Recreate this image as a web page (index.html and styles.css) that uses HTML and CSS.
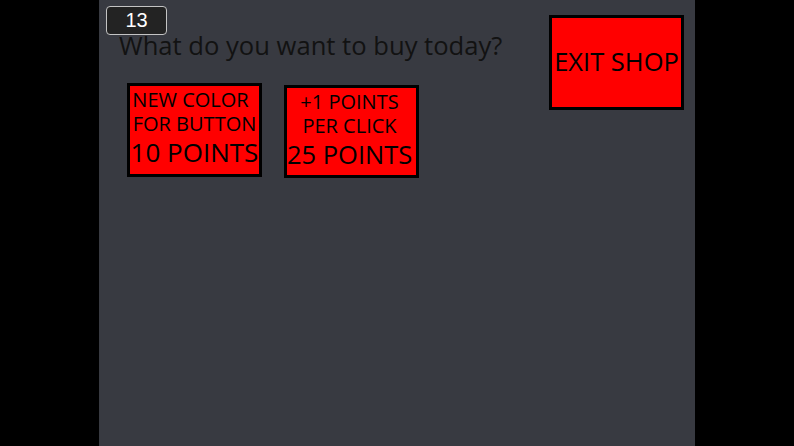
FILE: index.html
```html
<!DOCTYPE html>
<html>
<head>
<meta charset="utf-8">
<link rel="stylesheet" href="styles.css">
</head>
<body>
<div class="panel">
  <div class="main">
    <div class="counter">13</div>
    <div class="question">What do you want to buy today?</div>
    <div class="items">
      <div class="item">
        <div class="line first">NEW COLOR</div>
        <div class="line">FOR BUTTON</div>
        <div class="price">10 POINTS</div>
      </div>
      <div class="item second">
        <div class="line">+1 POINTS</div>
        <div class="line">PER CLICK</div>
        <div class="price">25 POINTS</div>
      </div>
    </div>
  </div>
  <div class="exit">EXIT SHOP</div>
</div>
</body>
</html>
```
FILE: styles.css
```css
html, body {
  margin: 0;
  padding: 0;
  background: #000;
  height: 100%;
}
body {
  display: flex;
  justify-content: center;
  font-family: "Open Sans", "Noto Sans", sans-serif;
}
.panel {
  width: 596px;
  height: 446px;
  background: #383a41;
  box-sizing: border-box;
  padding-top: 6px;
  display: grid;
  grid-template-columns: 1fr auto;
  align-items: start;
}
.main {
  display: flex;
  flex-direction: column;
  align-items: flex-start;
}
.counter {
  margin-left: 7px;
  width: 61px;
  height: 29px;
  box-sizing: border-box;
  border: 1px solid #c4c4c4;
  border-radius: 4px;
  background: #232323;
  color: #fff;
  font-family: "Liberation Sans", Arial, sans-serif;
  font-size: 20px;
  line-height: 27px;
  text-align: center;
}
.question {
  margin-left: 20px;
  font-size: 25.6px;
  line-height: 21px;
  color: #121212;
  white-space: nowrap;
}
.items {
  display: flex;
  align-items: flex-start;
  gap: 22px;
  margin-top: 27px;
  margin-left: 28px;
}
.item {
  width: 135px;
  height: 94px;
  box-sizing: border-box;
  border: 3px solid #000;
  background: #ff0000;
  color: #000;
  text-align: center;
  padding-top: 2px;
}
.item.second {
  margin-top: 2px;
  height: 93px;
  padding-right: 4px;
}
.line {
  font-size: 20px;
  line-height: 24px;
  white-space: nowrap;
}
.line.first {
  padding-right: 8px;
}
.price {
  font-size: 26px;
  line-height: 33px;
  white-space: nowrap;
}
.item.second .price {
  font-size: 25.5px;
}
.exit {
  margin-top: 9px;
  margin-right: 11px;
  width: 135px;
  height: 95px;
  box-sizing: border-box;
  border: 3px solid #000;
  background: #ff0000;
  color: #000;
  font-size: 25.5px;
  padding-bottom: 4px;
  display: flex;
  align-items: center;
  justify-content: center;
  white-space: nowrap;
}
```
